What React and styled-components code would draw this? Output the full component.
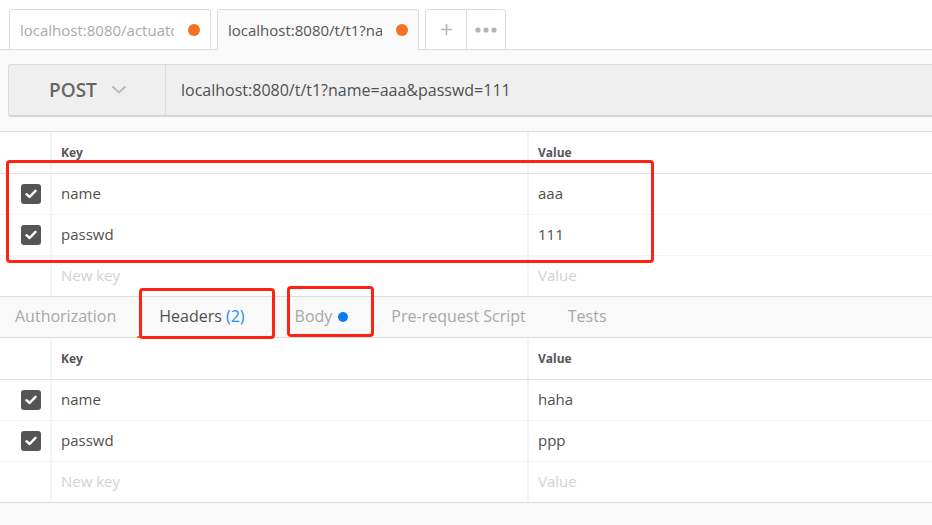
import React from "react";
import styled, { createGlobalStyle } from "styled-components";

const GlobalStyle = createGlobalStyle`
  html, body {
    margin: 0;
    padding: 0;
    background: #ffffff;
  }
  body {
    font-family: "Open Sans", "Noto Sans", sans-serif;
  }
`;

const Page = styled.div`
  position: relative;
  width: 932px;
  height: 525px;
  overflow: hidden;
  background: #f9f9f9;
`;

const TabBar = styled.div`
  display: flex;
  align-items: flex-end;
  gap: 6px;
  height: 50px;
  padding-left: 9px;
  background: #ffffff;
  border-bottom: 1px solid #dcdcdc;
  box-sizing: border-box;
`;

const Tab = styled.div`
  display: flex;
  align-items: center;
  gap: 14px;
  width: 202px;
  height: 41px;
  box-sizing: border-box;
  padding: 0 10px 0 10px;
  margin-bottom: -1px;
  border: 1px solid #dcdcdc;
  border-bottom: ${(p) => (p.$active ? "none" : "1px solid #dcdcdc")};
  border-radius: 3px 3px 0 0;
  background: ${(p) => (p.$active ? "#f9f9f9" : "#ffffff")};
`;

const TabTitle = styled.span`
  flex: 1;
  overflow: hidden;
  white-space: nowrap;
  font-size: 15px;
  color: ${(p) => (p.$active ? "#555555" : "#aaaaaa")};
`;

const Dot = styled.span`
  flex: none;
  width: 12px;
  height: 12px;
  border-radius: 50%;
  background: ${(p) => p.$color};
`;

const ActionGroup = styled.div`
  display: flex;
  height: 41px;
  margin-bottom: -1px;
  box-sizing: border-box;
  border: 1px solid #dcdcdc;
  border-radius: 3px 3px 0 0;
  background: #ffffff;
`;

const ActionButton = styled.div`
  display: flex;
  align-items: center;
  justify-content: center;
  width: ${(p) => p.$w}px;
  border-left: ${(p) => (p.$divider ? "1px solid #dcdcdc" : "none")};
  color: #b5b5b5;
`;

const RequestBar = styled.div`
  display: flex;
  height: 53px;
  margin: 14px 0 0 8px;
  box-sizing: border-box;
  border: 1px solid #dcdcdc;
  border-right: none;
  border-bottom: 2px solid #d6d6d6;
  border-radius: 3px 0 0 3px;
  background: #efefef;
`;

const MethodSelect = styled.div`
  display: flex;
  align-items: center;
  gap: 14px;
  width: 157px;
  padding: 0 0 1px 40px;
  box-sizing: border-box;
  border-right: 1px solid #dcdcdc;
  font-size: 19px;
  font-weight: 600;
  color: #666666;
`;

const UrlInput = styled.div`
  flex: 1;
  display: flex;
  align-items: center;
  padding-left: 15px;
  font-size: 16px;
  color: #505050;
  white-space: nowrap;
`;

const Table = styled.div`
  margin-top: ${(p) => p.$top || 0}px;
  background: #ffffff;
  border-top: ${(p) => (p.$top ? "1px solid #dcdcdc" : "none")};
  border-bottom: ${(p) => (p.$last ? "1px solid #dcdcdc" : "none")};
`;

const Row = styled.div`
  display: grid;
  grid-template-columns: 50px 477px 1fr;
  height: ${(p) => (p.$head ? 41 : 40)}px;
  border-bottom: 1px solid ${(p) => (p.$head ? "#e2e2e2" : "#f3f3f3")};

  &:last-child {
    border-bottom: none;
  }
`;

const Cell = styled.div`
  display: flex;
  align-items: ${(p) => (p.$head ? "flex-end" : "center")};
  padding: ${(p) => (p.$head ? "0 0 12px 9px" : "0 0 2px 9px")};
  border-left: ${(p) => (p.$first ? "none" : "2px solid #f4f4f4")};
  font-size: ${(p) => (p.$head ? "12px" : "15px")};
  font-weight: ${(p) => (p.$head ? 700 : 400)};
  color: ${(p) => (p.$muted ? "#d2d2d2" : p.$head ? "#555555" : "#505050")};
`;

const CheckCell = styled.div`
  display: flex;
  align-items: center;
  justify-content: center;
  padding-left: 12px;
`;

const CheckBox = styled.span`
  display: flex;
  align-items: center;
  justify-content: center;
  width: 20px;
  height: 20px;
  border-radius: 3px;
  background: #555555;
`;

const SectionTabs = styled.div`
  display: flex;
  height: 42px;
  box-sizing: border-box;
  border-top: 1px solid #dcdcdc;
  border-bottom: 1px solid #dcdcdc;
  background: #f9f9f9;
`;

const SectionTab = styled.div`
  display: flex;
  align-items: center;
  gap: 6px;
  padding: 0 21px 2px ${(p) => p.$left || 21}px;
  font-size: 16px;
  color: ${(p) => (p.$active ? "#505050" : "#a8a8a8")};
  border-bottom: 2px solid ${(p) => (p.$active ? "#f47023" : "transparent")};
  margin-bottom: -1px;
`;

const Count = styled.span`
  color: #2a8cf0;
`;

const BlueDot = styled.span`
  width: 10px;
  height: 10px;
  border-radius: 50%;
  background: #0b7cf4;
  margin-top: 2px;
`;

const Mark = styled.div`
  position: absolute;
  left: ${(p) => p.$x}px;
  top: ${(p) => p.$y}px;
  width: ${(p) => p.$w}px;
  height: ${(p) => p.$h}px;
  box-sizing: border-box;
  border: 3px solid #ff2112;
  border-radius: 4px;
  pointer-events: none;
`;

const Check = () => (
  <svg width="12" height="10" viewBox="0 0 12 10">
    <polyline
      points="1.5,5.2 4.6,8 10.5,1.8"
      fill="none"
      stroke="#ffffff"
      strokeWidth="2.4"
      strokeLinecap="round"
      strokeLinejoin="round"
    />
  </svg>
);

const Chevron = () => (
  <svg width="16" height="9" viewBox="0 0 16 9">
    <polyline
      points="1.5,1.5 8,7.5 14.5,1.5"
      fill="none"
      stroke="#b9b9b9"
      strokeWidth="2"
    />
  </svg>
);

const KeyValueTable = ({ rows, top, last }) => (
  <Table $top={top} $last={last}>
    <Row $head>
      <Cell $first $head />
      <Cell $head>Key</Cell>
      <Cell $head>Value</Cell>
    </Row>
    {rows.map((r) => (
      <Row key={r.key}>
        <CheckCell>
          <CheckBox>
            <Check />
          </CheckBox>
        </CheckCell>
        <Cell>{r.key}</Cell>
        <Cell>{r.value}</Cell>
      </Row>
    ))}
    <Row>
      <Cell $first />
      <Cell $muted>New key</Cell>
      <Cell $muted>Value</Cell>
    </Row>
  </Table>
);

export default function App() {
  return (
    <>
      <GlobalStyle />
      <Page>
        <TabBar>
          <Tab>
            <TabTitle>localhost:8080/actuator/health</TabTitle>
            <Dot $color="#f47023" />
          </Tab>
          <Tab $active>
            <TabTitle $active>localhost:8080/t/t1?name=aaa</TabTitle>
            <Dot $color="#f47023" />
          </Tab>
          <ActionGroup>
            <ActionButton $w={40}>
              <svg width="11" height="11" viewBox="0 0 11 11">
                <path d="M5.5 0v11M0 5.5h11" stroke="#b5b5b5" strokeWidth="1.6" />
              </svg>
            </ActionButton>
            <ActionButton $w={38} $divider>
              <svg width="22" height="6" viewBox="0 0 22 6">
                <circle cx="3" cy="3" r="2.6" fill="#b5b5b5" />
                <circle cx="11" cy="3" r="2.6" fill="#b5b5b5" />
                <circle cx="19" cy="3" r="2.6" fill="#b5b5b5" />
              </svg>
            </ActionButton>
          </ActionGroup>
        </TabBar>

        <RequestBar>
          <MethodSelect>
            POST
            <Chevron />
          </MethodSelect>
          <UrlInput>localhost:8080/t/t1?name=aaa&amp;passwd=111</UrlInput>
        </RequestBar>

        <KeyValueTable
          top={14}
          rows={[
            { key: "name", value: "aaa" },
            { key: "passwd", value: "111" },
          ]}
        />

        <SectionTabs>
          <SectionTab $left={15}>Authorization</SectionTab>
          <SectionTab $active $left={22}>
            <span>
              Headers <Count>(2)</Count>
            </span>
          </SectionTab>
          <SectionTab $left={29}>
            Body
            <BlueDot />
          </SectionTab>
          <SectionTab $left={22}>Pre-request Script</SectionTab>
          <SectionTab $left={21}>Tests</SectionTab>
        </SectionTabs>

        <KeyValueTable
          last
          rows={[
            { key: "name", value: "haha" },
            { key: "passwd", value: "ppp" },
          ]}
        />

        <Mark $x={6} $y={160} $w={648} $h={103} />
        <Mark $x={139} $y={288} $w={136} $h={51} />
        <Mark $x={287} $y={286} $w={87} $h={51} />
      </Page>
    </>
  );
}
